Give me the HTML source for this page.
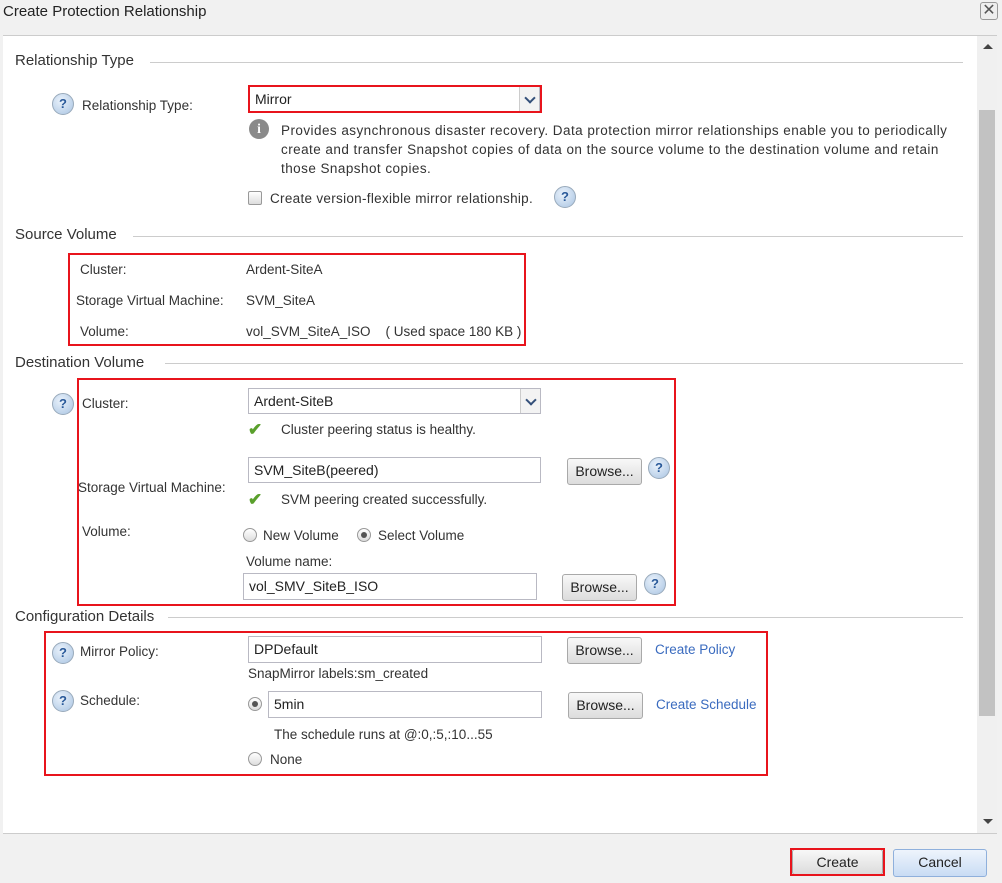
<!DOCTYPE html>
<html><head><style>
*{margin:0;padding:0;box-sizing:border-box}
body{width:1002px;height:883px;overflow:hidden;background:#f1f1f1;font-family:"Liberation Sans",sans-serif;font-size:13.5px;color:#333;position:relative}
.a{position:absolute;white-space:nowrap}
.h{font-size:15px;color:#333}
.line{position:absolute;height:1px;background:#ccc}
.red{position:absolute;border:2px solid #e8141c}
.inp{position:absolute;background:#fff;border:1px solid #b9b9c3;padding-left:5px;line-height:24px;font-size:14px;color:#222}
.btn{position:absolute;border:1px solid #a9a9a9;border-radius:3px;background:linear-gradient(#f8f8f8,#dcdcdc);text-align:center;line-height:24px;font-size:14px;color:#222}
.q{position:absolute;width:22px;height:22px;border-radius:50%;background:radial-gradient(circle at 40% 35%,#eaf2fb,#a9c4e2);border:1px solid #9ab;color:#2a5a9a;font-weight:bold;font-size:13px;text-align:center;line-height:20px}
.dd{position:absolute;right:0;top:0;width:20px;height:100%;border-left:1px solid #ccc;background:#f3f3f3}
.dd:after{content:"";position:absolute;left:6px;top:7px;width:6px;height:6px;border-right:2px solid #34507a;border-bottom:2px solid #34507a;transform:rotate(45deg)}
.chk{position:absolute;color:#5aa02c;font-size:17px;font-weight:bold}
.rad{position:absolute;width:14px;height:14px;border-radius:50%;border:1px solid #999;background:linear-gradient(#fff,#ddd)}
.rad.on:after{content:"";position:absolute;left:3px;top:3px;width:6px;height:6px;border-radius:50%;background:#555}
.lnk{color:#3a6bbf}
</style></head><body>
<div class="a" style="left:3px;top:3px;font-size:15px;color:#222">Create Protection Relationship</div>
<div class="a" style="left:980px;top:2px;width:18px;height:18px;border:1px solid #999;border-radius:3px;background:#eee;text-align:center;line-height:16px;font-size:16px;color:#555">✕</div>
<div style="position:absolute;left:3px;top:35px;width:994px;height:1px;background:#ccc"></div>
<div style="position:absolute;left:3px;top:36px;width:974px;height:797px;background:#fff"></div>
<div style="position:absolute;left:977px;top:36px;width:20px;height:797px;background:#f0f0f0"></div>
<div style="position:absolute;left:979px;top:110px;width:16px;height:606px;background:#c2c2c2"></div>
<div class="a" style="left:983px;top:44px;border:5px solid transparent;border-bottom:5px solid #444;border-top:0"></div>
<div class="a" style="left:983px;top:819px;border:5px solid transparent;border-top:5px solid #444;border-bottom:0"></div>
<div style="position:absolute;left:3px;top:833px;width:994px;height:1px;background:#ccc"></div>

<div class="a h" style="left:15px;top:52px">Relationship Type</div><div class="line" style="left:150px;top:62px;width:813px"></div>
<div class="q" style="left:52px;top:93px">?</div>
<div class="a" style="left:82px;top:98px">Relationship Type:</div>
<div class="inp" style="left:249px;top:86px;width:291px;height:26px">Mirror<div class="dd"></div></div>
<div class="red" style="left:248px;top:85px;width:294px;height:28px"></div>
<div class="a" style="left:249px;top:119px;width:20px;height:20px;border-radius:50%;background:#8a8a8a;color:#fff;font-weight:bold;text-align:center;line-height:20px;font-family:'Liberation Serif',serif">i</div>
<div class="a" style="left:281px;top:121px;line-height:19px;letter-spacing:0.45px">Provides asynchronous disaster recovery. Data protection mirror relationships enable you to periodically<br>create and transfer Snapshot copies of data on the source volume to the destination volume and retain<br>those Snapshot copies.</div>
<div class="a" style="left:248px;top:191px;width:14px;height:14px;border:1px solid #999;border-radius:2px;background:linear-gradient(#fff,#ddd)"></div>
<div class="a" style="left:270px;top:191px;letter-spacing:0.3px">Create version-flexible mirror relationship.</div>
<div class="q" style="left:554px;top:186px">?</div>

<div class="a h" style="left:15px;top:226px">Source Volume</div><div class="line" style="left:133px;top:236px;width:830px"></div>
<div class="red" style="left:68px;top:253px;width:458px;height:93px"></div>
<div class="a" style="left:80px;top:262px">Cluster:</div><div class="a" style="left:246px;top:262px">Ardent-SiteA</div>
<div class="a" style="left:76px;top:293px">Storage Virtual Machine:</div><div class="a" style="left:246px;top:293px">SVM_SiteA</div>
<div class="a" style="left:80px;top:324px">Volume:</div><div class="a" style="left:246px;top:324px">vol_SVM_SiteA_ISO &nbsp;&nbsp;&nbsp;( Used space 180 KB )</div>

<div class="a h" style="left:15px;top:354px">Destination Volume</div><div class="line" style="left:165px;top:363px;width:798px"></div>
<div class="red" style="left:77px;top:378px;width:599px;height:228px"></div>
<div class="q" style="left:52px;top:393px">?</div>
<div class="a" style="left:82px;top:396px">Cluster:</div>
<div class="inp" style="left:248px;top:388px;width:293px;height:26px">Ardent-SiteB<div class="dd"></div></div>
<div class="chk" style="left:248px;top:420px">✔</div><div class="a" style="left:281px;top:422px">Cluster peering status is healthy.</div>
<div class="a" style="left:78px;top:480px">Storage Virtual Machine:</div>
<div class="inp" style="left:248px;top:457px;width:293px;height:26px">SVM_SiteB(peered)</div>
<div class="btn" style="left:567px;top:458px;width:75px;height:27px">Browse...</div>
<div class="q" style="left:648px;top:457px">?</div>
<div class="chk" style="left:248px;top:490px">✔</div><div class="a" style="left:281px;top:492px">SVM peering created successfully.</div>
<div class="a" style="left:82px;top:524px">Volume:</div>
<div class="rad" style="left:243px;top:528px"></div><div class="a" style="left:263px;top:528px">New Volume</div>
<div class="rad on" style="left:357px;top:528px"></div><div class="a" style="left:378px;top:528px">Select Volume</div>
<div class="a" style="left:246px;top:554px">Volume name:</div>
<div class="inp" style="left:243px;top:573px;width:294px;height:27px">vol_SMV_SiteB_ISO</div>
<div class="btn" style="left:562px;top:574px;width:75px;height:27px">Browse...</div>
<div class="q" style="left:644px;top:573px">?</div>

<div class="a h" style="left:15px;top:608px">Configuration Details</div><div class="line" style="left:168px;top:617px;width:795px"></div>
<div class="red" style="left:44px;top:631px;width:724px;height:145px"></div>
<div class="q" style="left:52px;top:642px">?</div>
<div class="a" style="left:80px;top:644px">Mirror Policy:</div>
<div class="inp" style="left:248px;top:636px;width:294px;height:27px">DPDefault</div>
<div class="btn" style="left:567px;top:637px;width:75px;height:27px">Browse...</div>
<div class="a lnk" style="left:655px;top:642px">Create Policy</div>
<div class="a" style="left:248px;top:666px">SnapMirror labels:sm_created</div>
<div class="q" style="left:52px;top:690px">?</div>
<div class="a" style="left:80px;top:693px">Schedule:</div>
<div class="rad on" style="left:248px;top:697px"></div>
<div class="inp" style="left:268px;top:691px;width:274px;height:27px">5min</div>
<div class="btn" style="left:568px;top:692px;width:75px;height:27px">Browse...</div>
<div class="a lnk" style="left:656px;top:697px">Create Schedule</div>
<div class="a" style="left:274px;top:727px">The schedule runs at @:0,:5,:10...55</div>
<div class="rad" style="left:248px;top:752px"></div><div class="a" style="left:270px;top:752px">None</div>

<div class="btn" style="left:792px;top:849px;width:91px;height:26px">Create</div>
<div class="red" style="left:790px;top:848px;width:95px;height:28px"></div>
<div class="btn" style="left:893px;top:849px;width:94px;height:28px;background:linear-gradient(#eef4fc,#c9dcf4);border-color:#8fb0dc">Cancel</div>
</body></html>
